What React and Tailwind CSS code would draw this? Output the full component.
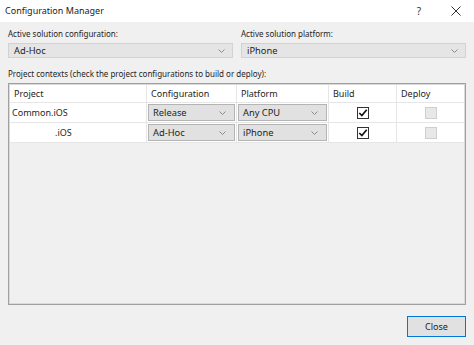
import React from "react";

const font = { fontFamily: '"Noto Sans", "Open Sans", sans-serif' };

function Chevron() {
  return (
    <svg width="7" height="4" viewBox="0 0 7 4" className="shrink-0">
      <path d="M0.5 0.5 L3.5 3.5 L6.5 0.5" fill="none" stroke="#8a8a8a" strokeWidth="1" />
    </svg>
  );
}

function Combo({ value, className = "" }) {
  return (
    <div
      className={`flex items-center justify-between bg-[#e5e5e5] border border-[#d2d2d2] pl-[5px] pr-[7px] text-[9.3px] text-[#1e1e1e] ${className}`}
    >
      <span>{value}</span>
      <Chevron />
    </div>
  );
}

function CellCombo({ value }) {
  return (
    <div className="flex items-center justify-between h-full bg-[#e1e1e1] border border-[#b4b4b4] pl-[4px] pr-[8px] text-[9.3px] text-[#1e1e1e]">
      <span>{value}</span>
      <Chevron />
    </div>
  );
}

function Check({ checked, disabled }) {
  return (
    <div
      className={`w-[12px] h-[12px] border flex items-center justify-center ${
        disabled ? "border-[#cfcfcf] bg-[#e8e8e8]" : "border-[#333333] bg-white"
      }`}
    >
      {checked && (
        <svg width="10" height="10" viewBox="0 0 10 10">
          <path d="M1.3 5 L3.9 7.6 L8.7 1.8" fill="none" stroke="#111" strokeWidth="1.7" />
        </svg>
      )}
    </div>
  );
}

const cols = "grid grid-cols-[137px_90px_92px_68px_1fr]";

function Row({ project, indent, config, platform }) {
  return (
    <div className={`${cols} h-[20px] border-b border-[#e6e6e6]`}>
      <div
        className={`bg-white flex items-center text-[9px] text-[#1e1e1e] border-r border-[#e6e6e6] ${
          indent ? "pl-[45px]" : "pl-[2px]"
        }`}
      >
        {project}
      </div>
      <div className="bg-white p-[1px] border-r border-[#e6e6e6]">
        <CellCombo value={config} />
      </div>
      <div className="bg-white p-[1px] border-r border-[#e6e6e6]">
        <CellCombo value={platform} />
      </div>
      <div className="bg-white flex items-center justify-center border-r border-[#e6e6e6]">
        <Check checked />
      </div>
      <div className="bg-white flex items-center justify-center">
        <Check disabled />
      </div>
    </div>
  );
}

export default function App() {
  return (
    <div className="w-[474px] h-[345px] bg-[#f0f0f0] flex flex-col overflow-hidden" style={font}>
      {/* Title bar */}
      <div className="h-[22px] bg-white flex items-center justify-between shrink-0">
        <span className="pl-[5px] text-[9px] text-[#222]">Configuration Manager</span>
        <div className="flex items-center text-[#333]">
          <span className="text-[10px] mr-[30px]">?</span>
          <svg width="10" height="10" viewBox="0 0 10 10" className="mr-[13px]">
            <path d="M0.5 0.5 L9.5 9.5 M9.5 0.5 L0.5 9.5" stroke="#333" strokeWidth="1" />
          </svg>
        </div>
      </div>

      <div className="flex-1 flex flex-col px-[8px] pt-[4px]">
        {/* Active solution pickers */}
        <div className="grid grid-cols-[225px_225px] gap-x-[8px]">
          <div className="flex flex-col">
            <span className="text-[8px] text-[#1e1e1e] h-[15px] leading-[15px]">
              Active solution configuration:
            </span>
            <Combo value="Ad-Hoc" className="h-[15px] mt-[2px]" />
          </div>
          <div className="flex flex-col">
            <span className="text-[8px] text-[#1e1e1e] h-[15px] leading-[15px]">
              Active solution platform:
            </span>
            <Combo value="iPhone" className="h-[15px] mt-[2px]" />
          </div>
        </div>

        <span className="text-[8px] text-[#1e1e1e] mt-[8px] h-[16px] leading-[16px]">
          Project contexts (check the project configurations to build or deploy):
        </span>

        {/* Grid */}
        <div className="mt-[1px] w-[458px] h-[222px] border border-[#a0a0a0] shadow-[inset_0_0_0_1px_#dadada] p-[1px]">
          <div className={`${cols} h-[18px] bg-white border-b border-[#e6e6e6] text-[9px] text-[#1e1e1e]`}>
            <div className="pl-[4px] flex items-center border-r border-[#e6e6e6]">Project</div>
            <div className="pl-[4px] flex items-center border-r border-[#e6e6e6]">Configuration</div>
            <div className="pl-[4px] flex items-center border-r border-[#e6e6e6]">Platform</div>
            <div className="pl-[4px] flex items-center border-r border-[#e6e6e6]">Build</div>
            <div className="pl-[4px] flex items-center">Deploy</div>
          </div>
          <Row project="Common.iOS" config="Release" platform="Any CPU" />
          <Row project=".iOS" indent config="Ad-Hoc" platform="iPhone" />
        </div>

        {/* Footer */}
        <div className="flex justify-end mt-[11px]">
          <button className="w-[59px] h-[21px] bg-[#e1e1e1] border border-[#0078d7] text-[9px] text-[#1e1e1e]">
            Close
          </button>
        </div>
      </div>
    </div>
  );
}
